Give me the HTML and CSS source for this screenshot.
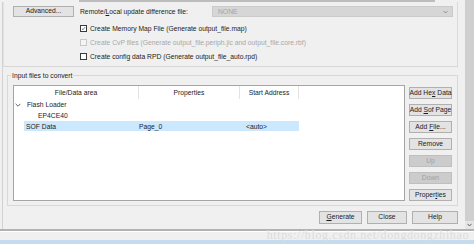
FILE: index.html
```html
<!DOCTYPE html>
<html>
<head>
<meta charset="utf-8">
<link rel="stylesheet" href="styles.css">
</head>
<body>
<div class="screen">
  <div class="upper">
    <div class="main">
      <div class="topbar"></div>
      <div class="panel">
        <div class="group1">
          <div class="row-adv">
            <div class="btn btn-adv"><span>Advanced...</span></div>
            <span class="lbl">Remote/<u>L</u>ocal update difference file:</span>
            <div class="combo"><span>NONE</span>
              <svg class="combo-arrow" width="5" height="4" viewBox="0 0 5 4"><path d="M0.5 1 L2.5 3 L4.5 1" fill="none" stroke="#8a8a8a" stroke-width="0.9"/></svg>
            </div>
          </div>
          <div class="checks">
            <div class="check">
              <span class="box"><svg width="7" height="7" viewBox="0 0 7 7"><path d="M1.2 3.6 L2.8 5.2 L5.8 1.6" fill="none" stroke="#333" stroke-width="0.9"/></svg></span>
              <span>Create Memory Map File (Generate output_file.map)</span>
            </div>
            <div class="check disabled">
              <span class="box"></span>
              <span>Create CvP files (Generate output_file.periph.jic and output_file.core.rbf)</span>
            </div>
            <div class="check">
              <span class="box"></span>
              <span>Create config data RPD (Generate output_file_auto.rpd)</span>
            </div>
          </div>
        </div>
        <fieldset class="group2">
          <legend>Input files to convert</legend>
          <div class="g2body">
            <div class="tree">
              <div class="thead">
                <div class="th c0">File/Data area</div>
                <div class="th c1">Properties</div>
                <div class="th c2">Start Address</div>
              </div>
              <div class="trow lvl0">
                <svg class="chev" width="6" height="4" viewBox="0 0 6 4"><path d="M0.6 0.8 L3 3.2 L5.4 0.8" fill="none" stroke="#555" stroke-width="0.9"/></svg>
                <span>Flash Loader</span>
              </div>
              <div class="trow lvl1"><span>EP4CE40</span></div>
              <div class="trow sel">
                <span class="s0">SOF Data</span>
                <span class="s1">Page_0</span>
                <span class="s2">&lt;auto&gt;</span>
              </div>
            </div>
            <div class="btncol">
              <div class="btn"><span>Add He<u>x</u> Data</span></div>
              <div class="btn"><span>Add <u>S</u>of Page</span></div>
              <div class="btn"><span>Add <u>F</u>ile...</span></div>
              <div class="btn"><span>Remove</span></div>
              <div class="btn dis"><span>Up</span></div>
              <div class="btn dis"><span>Down</span></div>
              <div class="btn"><span>Proper<u>t</u>ies</span></div>
            </div>
          </div>
        </fieldset>
        <div class="actions">
          <div class="btn b-gen"><span><u>G</u>enerate</span></div>
          <div class="btn b-close"><span>Close</span></div>
          <div class="btn b-help"><span>Help</span></div>
        </div>
      </div>
    </div>
    <div class="scrollbar">
      <div class="track"></div>
      <div class="sb-arrow"><svg width="5" height="4" viewBox="0 0 5 4"><path d="M0.5 0.8 L2.5 3 L4.5 0.8" fill="none" stroke="#555" stroke-width="0.9"/></svg></div>
    </div>
  </div>
  <div class="bottom">
    <div class="sep"></div>
    <div class="sep-hi"></div>
    <div class="gap"></div>
    <div class="blue"></div>
  </div>
  <div class="wm">https://blog.csdn.net/dongdongzhihao</div>
</div>
</body>
</html>
```

FILE: styles.css
```css
* { box-sizing: border-box; }
html, body { margin: 0; padding: 0; }
body {
  background: #f0f0f0;
  font-family: "Liberation Sans", Arial, sans-serif;
  font-size: 6.75px;
  color: #1c1c1c;
}
.screen {
  position: relative;
  width: 474px;
  height: 244px;
  overflow: hidden;
  display: flex;
  flex-direction: column;
}
.upper {
  height: 229px;
  display: flex;
}
.main {
  width: 465px;
  display: flex;
  flex-direction: column;
}
.topbar {
  margin-left: 79px;
  width: 356px;
  height: 2px;
  background: #bdbdbd;
}
.panel {
  flex: 1;
  margin-left: 2px;
  border-left: 1px solid #d2d2d2;
  display: flex;
  flex-direction: column;
}
.group1 {
  width: 455px;
  border-left: 1px solid #e2e2e2;
  border-right: 1px solid #dadada;
  border-bottom: 1px solid #d6d6d6;
  padding-top: 4px;
}
.row-adv {
  height: 11px;
  display: flex;
  align-items: center;
}
.btn {
  height: 12px;
  display: flex;
  align-items: center;
  justify-content: center;
  background: #e3e3e3;
  border: 1px solid #b0b0b0;
  white-space: nowrap;
  line-height: 1;
}
.btn u { text-decoration-thickness: 0.5px; text-underline-offset: 1px; }
.btn-adv {
  margin-left: 9px;
  width: 61px;
  height: 11px;
}
.lbl {
  margin-left: 6px;
  width: 132px;
  white-space: nowrap;
}
.lbl u { text-decoration-thickness: 0.5px; }
.combo {
  width: 241px;
  height: 11px;
  background: #d6d6d6;
  border: 1px solid #cacaca;
  display: flex;
  align-items: center;
  justify-content: space-between;
  padding: 0 4px 0 5px;
  color: #a4a4a4;
}
.checks {
  padding: 4px 0 3px 76px;
}
.check {
  height: 14px;
  display: flex;
  align-items: center;
  white-space: nowrap;
}
.box {
  width: 7px;
  height: 7px;
  border: 1px solid #3a3a3a;
  background: #fff;
  margin-right: 3px;
  display: flex;
  align-items: center;
  justify-content: center;
}
.box svg { display: block; }
.check.disabled { color: #a8a8a8; }
.check.disabled .box { border-color: #c8c8c8; background: #f4f4f4; }

.group2 {
  margin: 4px 0 0 4px;
  width: 451px;
  border: 1px solid #d8d8d8;
  padding: 5px 5px 4px 5px;
  min-width: 0;
}
.group2 legend {
  padding: 0 1px;
  margin-left: -2px;
  line-height: 9px;
  height: 9px;
}
.g2body {
  display: flex;
  gap: 4px;
}
.tree {
  width: 392px;
  height: 116px;
  background: #fff;
  border: 1px solid #a5a5a5;
}
.thead {
  height: 13px;
  display: flex;
}
.th {
  height: 13px;
  display: flex;
  align-items: center;
  justify-content: center;
  border-right: 1px solid #e3e3e3;
}
.c0 { width: 125px; }
.c1 { width: 101px; }
.c2 { width: 59px; }
.trow {
  height: 11px;
  display: flex;
  align-items: center;
  white-space: nowrap;
}
.lvl0 { padding-left: 1px; }
.chev { margin-right: 6px; }
.lvl1 { padding-left: 24px; }
.sel {
  margin-left: 10px;
  width: 275px;
  height: 10px;
  background: #cce8ff;
}
.s0 { padding-left: 2px; width: 115px; }
.s1 { width: 107px; }
.btncol {
  width: 43px;
  display: flex;
  flex-direction: column;
  gap: 5px;
  padding-top: 2px;
}
.btn.dis {
  background: #cccccc;
  border-color: #bfbfbf;
  color: #a2a2a2;
}
.actions {
  margin-top: 5px;
  height: 13px;
  display: flex;
  justify-content: flex-end;
  gap: 5px;
  padding-right: 7px;
}
.actions .btn { height: 13px; }
.b-gen { width: 43px; }
.b-close { width: 40px; }
.b-help { width: 46px; }

.scrollbar {
  width: 9px;
  display: flex;
  flex-direction: column;
}
.track {
  flex: 1;
  background: #cfcfcf;
}
.sb-arrow {
  height: 8px;
  background: #e6e6e6;
  display: flex;
  align-items: center;
  justify-content: center;
}
.bottom {
  flex: 1;
  display: flex;
  flex-direction: column;
}
.sep { height: 2px; background: #b2b2b2; }
.sep-hi { height: 1px; background: #ffffff; }
.gap { flex: 1; }
.blue { height: 4px; background: #c6dbee; }
.wm {
  position: absolute;
  right: 5px;
  top: 229px;
  font-family: "Liberation Serif", serif;
  font-size: 12px;
  letter-spacing: 0.6px;
  color: #dcdcdc;
  white-space: nowrap;
  line-height: 13px;
}
```
